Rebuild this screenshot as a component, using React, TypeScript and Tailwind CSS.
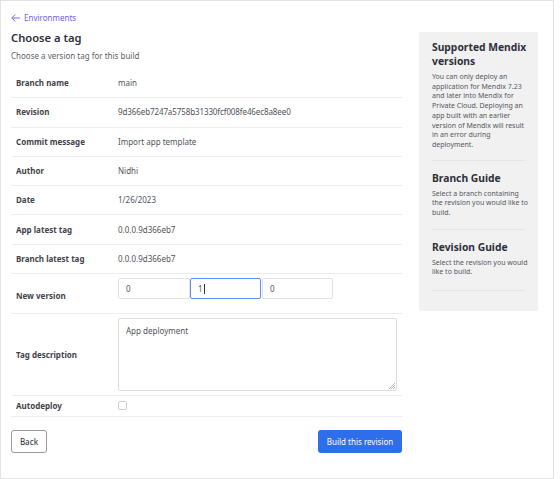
import React from "react";

const rows: [string, string][] = [
  ["Branch name", "main"],
  ["Revision", "9d366eb7247a5758b31330fcf008fe46ec8a8ee0"],
  ["Commit message", "Import app template"],
  ["Author", "Nidhi"],
  ["Date", "1/26/2023"],
  ["App latest tag", "0.0.0.9d366eb7"],
  ["Branch latest tag", "0.0.0.9d366eb7"],
];

export default function App() {
  return (
    <div
      className="w-[554px] h-[479px] border border-[#e3e3e3] bg-white flex text-[#3c3f47]"
      style={{ fontFamily: '"Noto Sans", "Open Sans", sans-serif' }}
    >
      <div className="w-[391px] ml-[10px] flex flex-col">
        <div className="mt-[11px] h-[12px] flex items-center gap-[4px] text-[#6f5fe3] text-[8px]">
          <svg width="9" height="8" viewBox="0 0 9 8" fill="none" stroke="#7a6be6" strokeWidth="1" strokeLinecap="round" strokeLinejoin="round">
            <path d="M8.5 4H1M4 0.8L0.8 4L4 7.2" />
          </svg>
          <span>Environments</span>
        </div>
        <div className="mt-[6px] text-[11.2px] leading-[16px] font-semibold text-[#2d3039]">Choose a tag</div>
        <div className="mt-[4px] text-[8px] leading-[12px] text-[#5c5f66]">Choose a version tag for this build</div>
        <div className="mt-[6px] flex flex-col">
          {rows.map(([k, v], i) => (
            <div
              key={k}
              className={`flex items-center h-[29.3px] ${i === 0 ? "" : "border-t border-[#ededed]"} text-[8px]`}
            >
              <div className="w-[107px] pl-[5px] font-bold text-[#3f424a]">{k}</div>
              <div className={`text-[#50535a] ${i === 1 ? "tracking-[-0.1px]" : ""}`}>{v}</div>
            </div>
          ))}
          <div className="flex h-[40px] border-t border-[#ededed] text-[8px]">
            <div className="w-[107px] pl-[5px] font-bold text-[#3f424a] self-center mt-[4px]">New version</div>
            <div className="flex mt-[4px]">
              <div className="w-[72px] h-[21px] border border-[#e2e2e2] rounded-[2px] flex items-center pl-[7px] text-[#50535a]">0</div>
              <div className="w-[71px] h-[21px] border-[1.5px] border-[#5b8ef0] rounded-[2px] flex items-center pl-[7px] text-[#50535a]">
                1<span className="inline-block w-[1px] h-[10px] bg-[#333] ml-[1px]" />
              </div>
              <div className="w-[71px] h-[21px] ml-[1px] border border-[#e2e2e2] rounded-[2px] flex items-center pl-[7px] text-[#50535a]">0</div>
            </div>
          </div>
          <div className="flex items-center h-[82px] border-t border-[#ededed] text-[8px]">
            <div className="w-[107px] pl-[5px] font-bold text-[#3f424a]">Tag description</div>
            <div className="relative w-[279px] h-[73px] border border-[#dedede] rounded-[2px] pl-[7px] pt-[6px] text-[#50535a]">
              App deployment
              <svg className="absolute right-[1px] bottom-[1px]" width="6" height="6" viewBox="0 0 6 6" stroke="#9a9a9a" strokeWidth="0.7">
                <path d="M6 0L0 6M6 2L2 6M6 4L4 6" />
              </svg>
            </div>
          </div>
          <div className="flex items-center h-[22px] border-t border-b border-[#ededed] text-[8px]">
            <div className="w-[107px] pl-[5px] font-bold text-[#3f424a]">Autodeploy</div>
            <div className="w-[9px] h-[9px] border border-[#cfcfcf] rounded-[2px] bg-white -mt-[2px]" />
          </div>
        </div>
        <div className="mt-[13px] flex justify-between">
          <button className="w-[36px] h-[23px] border border-[#9a9a9a] rounded-[3px] text-[8px] font-medium text-[#3f424a] bg-white">
            Back
          </button>
          <button className="w-[84px] h-[23px] rounded-[3px] text-[8px] text-white bg-[#2f6eea]">
            Build this revision
          </button>
        </div>
      </div>
      <div className="ml-[17px] mt-[31px] w-[119px] h-[279px] bg-[#f1f1f1] rounded-[2px] px-[13px] pt-[8px] self-start">
        <div className="border-b border-[#e4e4e4] pb-[10px]">
          <div className="w-[102px] text-[10.3px] leading-[14px] font-bold text-[#2d3039]">Supported Mendix versions</div>
          <div className="mt-[4px] w-[96px] text-[7px] leading-[9.7px] text-[#55585f]">
            You can only deploy an application for Mendix 7.23 and later into Mendix for Private Cloud. Deploying an app built with an earlier version of Mendix will result in an error during deployment.
          </div>
        </div>
        <div className="border-b border-[#e4e4e4] pt-[10px] pb-[11px]">
          <div className="text-[10.3px] leading-[14px] font-bold text-[#2d3039]">Branch Guide</div>
          <div className="mt-[4px] w-[97px] text-[7px] leading-[9.7px] text-[#55585f]">
            Select a branch containing the revision you would like to build.
          </div>
        </div>
        <div className="border-b border-[#e4e4e4] pt-[10px] pb-[13px]">
          <div className="text-[10.3px] leading-[14px] font-bold text-[#2d3039]">Revision Guide</div>
          <div className="mt-[4px] w-[96px] text-[7px] leading-[9.7px] text-[#55585f]">
            Select the revision you would like to build.
          </div>
        </div>
      </div>
    </div>
  );
}
